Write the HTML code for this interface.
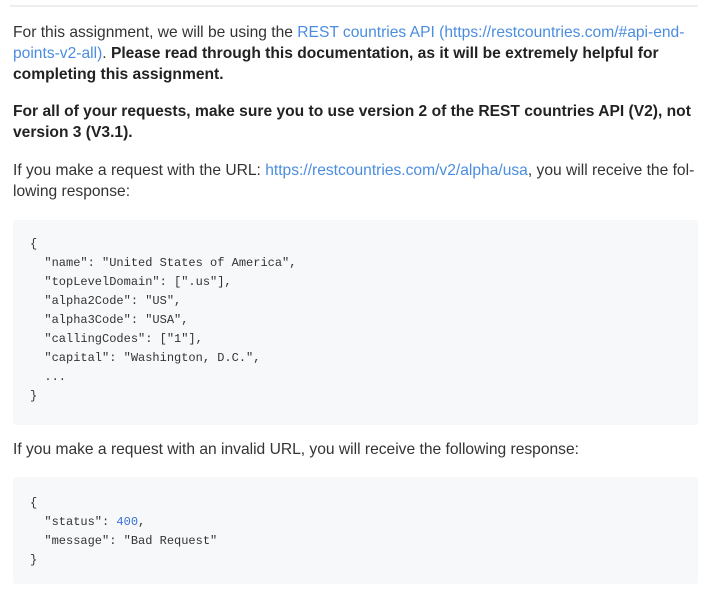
<!DOCTYPE html>
<html><head><meta charset="utf-8"><style>
body{margin:0;width:714px;height:592px;background:#fff;position:relative;overflow:hidden;font-family:"Liberation Sans",sans-serif;color:#333;}
.l{position:absolute;left:13px;white-space:nowrap;font-size:15.6px;line-height:21px;}
b{color:#222}
a{color:#4a8de0;text-decoration:none}
.hr{position:absolute;left:10px;top:5px;width:688px;height:2px;background:#eee}
.pre{position:absolute;left:13px;width:685px;background:#f6f8fa;border-radius:3px}
.c{position:absolute;left:30px;white-space:pre;font-family:"Liberation Mono",monospace;font-size:12px;line-height:19px;color:#333}
.n{color:#3a6fd8}
</style></head><body>
<div class="hr"></div>
<div class="l" style="top:22px">For this assignment, we will be using the <a>REST countries API (https://restcountries.com/#api-end-</a></div>
<div class="l" style="top:43px"><a>points-v2-all)</a>. <b>Please read through this documentation, as it will be extremely helpful for</b></div>
<div class="l" style="top:64px"><b>completing this assignment.</b></div>
<div class="l" style="top:101px"><b>For all of your requests, make sure you to use version 2 of the REST countries API (V2), not</b></div>
<div class="l" style="top:122px"><b>version 3 (V3.1).</b></div>
<div class="l" style="top:160px">If you make a request with the URL: <a>https://restcountries.com/v2/alpha/usa</a>, you will receive the fol-</div>
<div class="l" style="top:181px">lowing response:</div>
<div class="pre" style="top:220px;height:205px"></div>
<div class="c" style="top:235px">{
  "name": "United States of America",
  "topLevelDomain": [".us"],
  "alpha2Code": "US",
  "alpha3Code": "USA",
  "callingCodes": ["1"],
  "capital": "Washington, D.C.",
  ...
}</div>
<div class="l" style="top:439px">If you make a request with an invalid URL, you will receive the following response:</div>
<div class="pre" style="top:477px;height:107px"></div>
<div class="c" style="top:494px">{
  "status": <span class="n">400</span>,
  "message": "Bad Request"
}</div>
</body></html>
